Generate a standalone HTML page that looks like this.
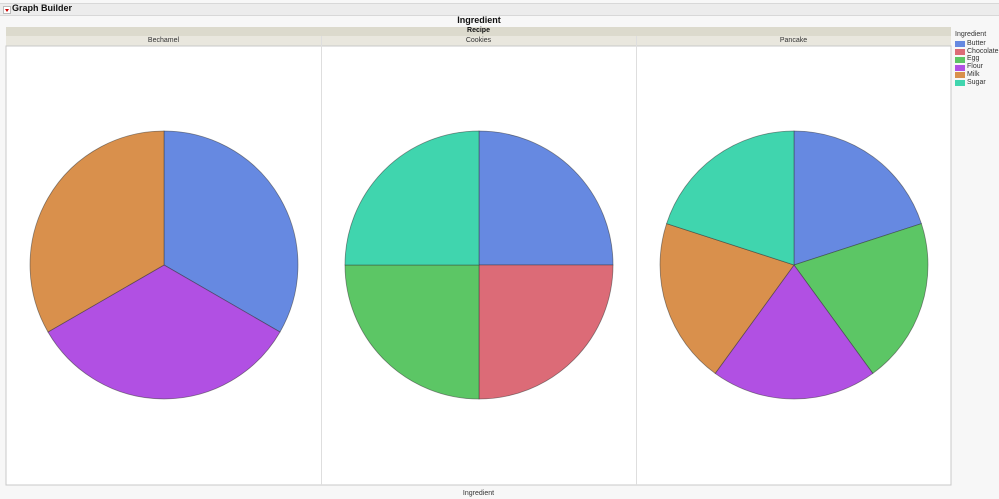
<!DOCTYPE html>
<html><head><meta charset="utf-8"><style>
body{margin:0;width:999px;height:499px;background:#f7f7f7;font-family:"Liberation Sans",sans-serif;position:relative;overflow:hidden}
.hdr{position:absolute;left:0;top:3px;width:999px;height:11px;background:#ececec;border-top:1px solid #d8d8d8;border-bottom:1px solid #d8d8d8}
.hdr span{position:absolute;left:12px;top:-1px;font-size:9px;font-weight:bold;color:#111}
.tri{position:absolute;left:3px;top:2px;width:6px;height:6px;background:#fff;border:1px solid #bbb}
.tri:after{content:"";position:absolute;left:1px;top:2px;border-left:2px solid transparent;border-right:2px solid transparent;border-top:3px solid #c00}
.t{position:absolute;font-size:8px;color:#333}
</style></head><body>
<div class="hdr"><div class="tri"></div><span>Graph Builder</span></div>
<div class="t" style="left:0;width:958px;top:15px;text-align:center;font-weight:bold;font-size:9px;color:#111">Ingredient</div>
<div style="position:absolute;left:6px;top:27px;width:945px;height:9px;background:#dcdacd"></div>
<div class="t" style="left:6px;width:945px;top:27px;text-align:center;font-weight:bold;font-size:7px;color:#111">Recipe</div>
<div style="position:absolute;left:6px;top:36px;width:945px;height:10px;background:#e9e7de"></div>
<div class="t" style="left:6px;width:315px;top:37px;text-align:center;font-size:7px">Bechamel</div>
<div class="t" style="left:321px;width:315px;top:37px;text-align:center;font-size:7px">Cookies</div>
<div class="t" style="left:636px;width:315px;top:37px;text-align:center;font-size:7px">Pancake</div>
<svg style="position:absolute;left:0;top:0" width="999" height="499">
<rect x="6" y="46" width="945" height="439" fill="#fff" stroke="#c8c8c8" stroke-width="1"/>
<line x1="321.5" y1="36" x2="321.5" y2="485" stroke="#dedede"/>
<line x1="636.5" y1="36" x2="636.5" y2="485" stroke="#dedede"/>
<g stroke="#333" stroke-opacity=".55" stroke-width=".8">
<path d="M164 265L164 131A134 134 0 0 1 280 332Z" fill="#6689e1"/>
<path d="M164 265L280 332A134 134 0 0 1 48 332Z" fill="#b150e3"/>
<path d="M164 265L48 332A134 134 0 0 1 164 131Z" fill="#d9904c"/>
<path d="M479 265L479 131A134 134 0 0 1 613 265Z" fill="#6689e1"/>
<path d="M479 265L613 265A134 134 0 0 1 479 399Z" fill="#dc6b77"/>
<path d="M479 265L479 399A134 134 0 0 1 345 265Z" fill="#5cc665"/>
<path d="M479 265L345 265A134 134 0 0 1 479 131Z" fill="#40d5ae"/>
<path d="M794 265L794 131A134 134 0 0 1 921.4 223.6Z" fill="#6689e1"/>
<path d="M794 265L921.4 223.6A134 134 0 0 1 872.8 373.4Z" fill="#5cc665"/>
<path d="M794 265L872.8 373.4A134 134 0 0 1 715.2 373.4Z" fill="#b150e3"/>
<path d="M794 265L715.2 373.4A134 134 0 0 1 666.6 223.6Z" fill="#d9904c"/>
<path d="M794 265L666.6 223.6A134 134 0 0 1 794 131Z" fill="#40d5ae"/>
</g>
<g>
<rect x="955" y="41" width="10" height="6" fill="#6689e1"/>
<rect x="955" y="49" width="10" height="6" fill="#dc6b77"/>
<rect x="955" y="57" width="10" height="6" fill="#5cc665"/>
<rect x="955" y="65" width="10" height="6" fill="#b150e3"/>
<rect x="955" y="72" width="10" height="6" fill="#d9904c"/>
<rect x="955" y="80" width="10" height="6" fill="#40d5ae"/>
</g>
</svg>
<div class="t" style="left:955px;top:31px;font-size:7px">Ingredient</div>
<div class="t" style="left:967px;top:40px;font-size:7px;line-height:7.7px">Butter<br>Chocolate<br>Egg<br>Flour<br>Milk<br>Sugar</div>
<div class="t" style="left:6px;width:945px;top:490px;text-align:center;font-size:7px">Ingredient</div>
</body></html>
